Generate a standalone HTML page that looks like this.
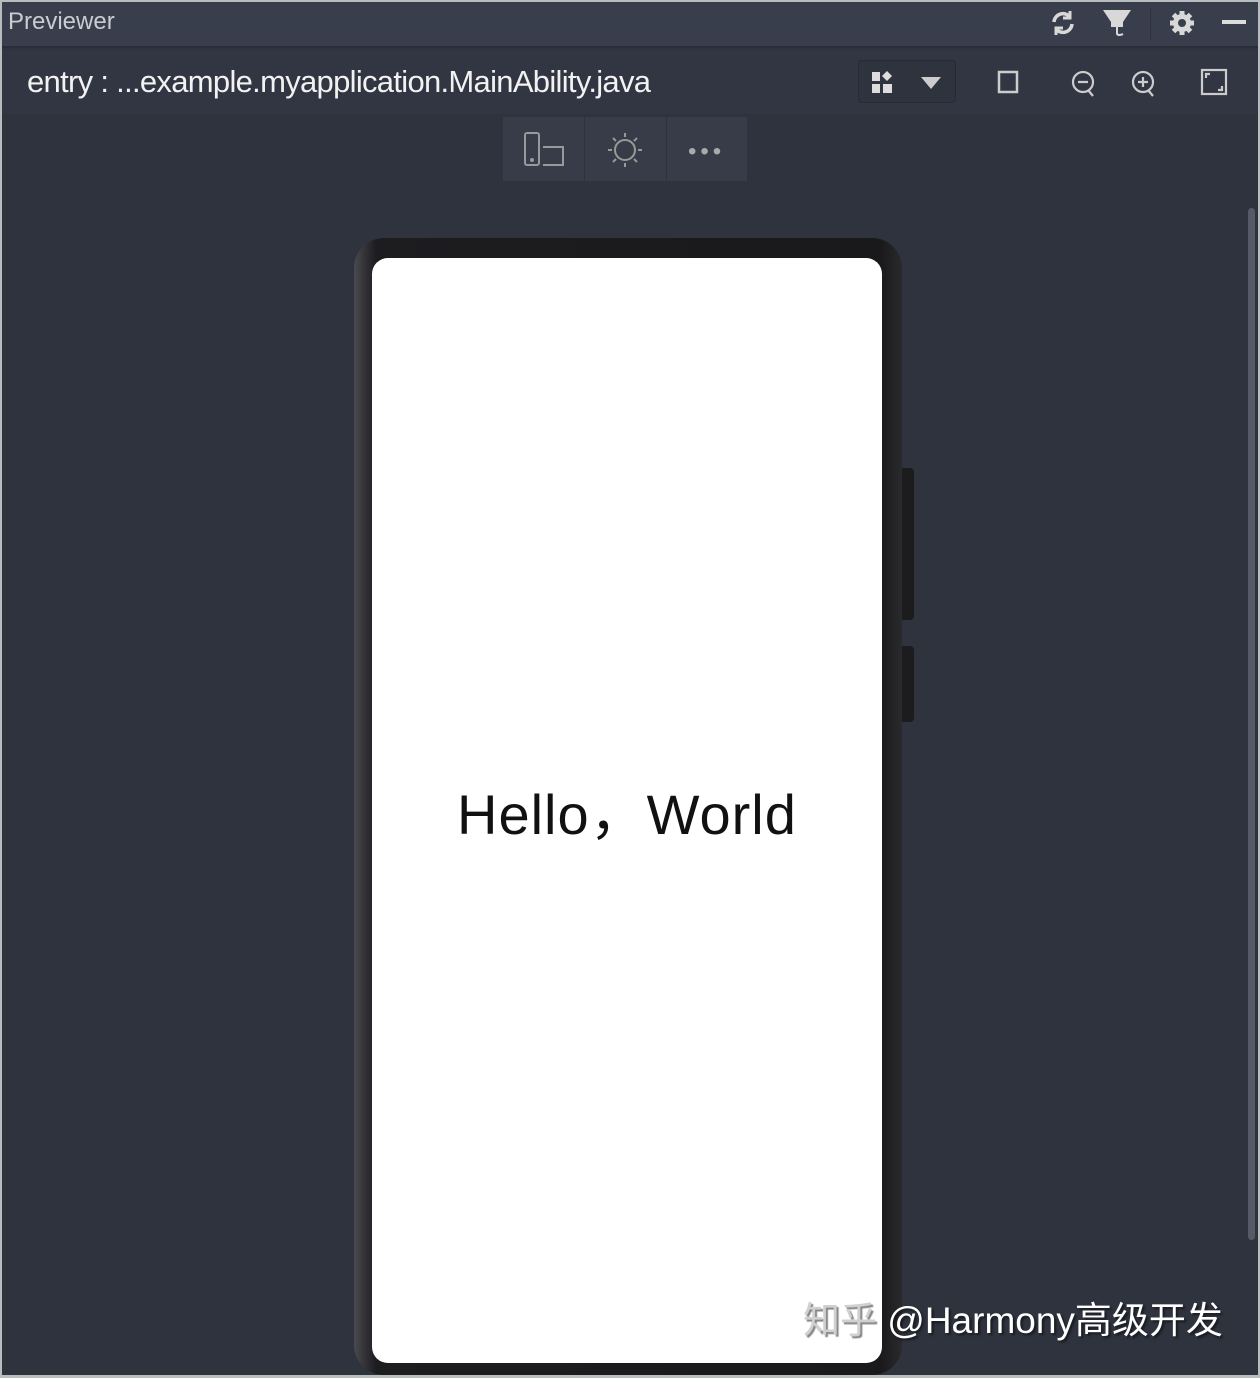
<!DOCTYPE html>
<html><head><meta charset="utf-8"><style>
*{margin:0;padding:0;box-sizing:border-box}
body{width:1260px;height:1378px;background:#2f333e;position:relative;overflow:hidden;font-family:"Liberation Sans","Noto Sans CJK SC",sans-serif}
.frame{position:absolute;left:0;top:0;width:1260px;height:1378px;border:2px solid #b9bcbf;border-bottom:3px solid #b9bfbd;pointer-events:none;z-index:9}
.title{position:absolute;left:0;top:0;width:1260px;height:48px;background:#383e4c;border-bottom:2px solid #2a2e38}
.title span{position:absolute;left:8px;top:8px;color:#c9ccd1;font-size:24px}
.bar{position:absolute;left:0;top:50px;width:1260px;height:64px;background:#323643}
.path{position:absolute;left:27px;top:64px;color:#f2f2f2;font-size:31px;letter-spacing:-0.7px}
.ico{position:absolute}
.strip{position:absolute;left:503px;top:117px;width:244px;height:64px;background:#383c48}
.strip div{position:absolute;top:0;width:1px;height:64px;background:#2e323c}
.phone{position:absolute;left:354px;top:238px;width:548px;height:1137px;border-radius:30px;background:linear-gradient(90deg,#4a4a4e 0,#1d1d20 4%,#19191b 96%,#2a2a2e 100%)}
.screen{position:absolute;left:372px;top:258px;width:510px;height:1105px;background:#fff;border-radius:16px}
.hello{position:absolute;left:457px;top:770px;font-size:56px;color:#111;letter-spacing:1px}
.btn{position:absolute;left:902px;width:12px;background:#1c1c1e;border-radius:0 4px 4px 0}
.scroll{position:absolute;left:1248px;top:208px;width:7px;height:1032px;background:#555a66;border-radius:4px}
.wm{position:absolute;left:803px;top:1290px;font-size:37px;color:#fff;text-shadow:2px 2px 2px rgba(0,0,0,.5)}
.wm b{font-weight:normal;color:#d0d0d0;text-shadow:2px 2px 1px #888}
</style></head><body>
<div class="title"><span>Previewer</span></div>
<svg class="ico" style="left:1048px;top:8px" width="30" height="30" viewBox="0 0 30 30" fill="none" stroke="#d8d8d8" stroke-width="3.5"><path d="M6 14a9 9 0 0 1 16-5"/><path d="M24 16a9 9 0 0 1-16 5"/><path d="M22 3v7h-7" stroke-width="3"/><path d="M8 27v-7h7" stroke-width="3"/></svg>
<svg class="ico" style="left:1100px;top:6px" width="34" height="34" viewBox="0 0 34 34"><path d="M3 4h28l-8 12v5h-12v-5z" fill="#d8d8d8"/><path d="M17 21v6c0 3 4 2 6 1" stroke="#d8d8d8" stroke-width="2" fill="none"/></svg>
<div style="position:absolute;left:1150px;top:8px;width:1px;height:32px;background:#2e333e"></div>
<svg class="ico" style="left:1167px;top:8px" width="30" height="30" viewBox="0 0 30 30"><circle cx="15" cy="15" r="9" fill="#d8d8d8"/><g stroke="#d8d8d8" stroke-width="5"><path d="M15 3v24M3 15h24M6.5 6.5l17 17M23.5 6.5l-17 17"/></g><circle cx="15" cy="15" r="4" fill="#383e4c"/></svg>
<div style="position:absolute;left:1222px;top:20px;width:24px;height:4px;background:#ddd"></div>
<div class="bar"></div>
<div class="path">entry : ...example.myapplication.MainAbility.java</div>
<div style="position:absolute;left:858px;top:60px;width:98px;height:43px;border:1px solid #262a33;border-radius:4px;background:#2f333e"></div>
<svg class="ico" style="left:870px;top:70px" width="26" height="26" viewBox="0 0 26 26" fill="#ddd"><rect x="2" y="2" width="8" height="9"/><rect x="2" y="14" width="8" height="9"/><rect x="13" y="14" width="9" height="9"/><path d="M17 1l5 5-5 5-5-5z"/></svg>
<svg class="ico" style="left:920px;top:75px" width="22" height="16"><path d="M1 2h20l-10 12z" fill="#ccc"/></svg>
<svg class="ico" style="left:994px;top:68px" width="28" height="28" viewBox="0 0 28 28" fill="none" stroke="#ccc" stroke-width="2.5"><rect x="5" y="4" width="18" height="20"/></svg>
<svg class="ico" style="left:1068px;top:68px" width="32" height="32" viewBox="0 0 32 32" fill="none" stroke="#ccc" stroke-width="2.2"><circle cx="15" cy="14" r="10"/><path d="M10 14h10M20 22l5 6"/></svg>
<svg class="ico" style="left:1128px;top:68px" width="32" height="32" viewBox="0 0 32 32" fill="none" stroke="#ccc" stroke-width="2.2"><circle cx="15" cy="14" r="10"/><path d="M10 14h10M15 9v10M20 22l5 6"/></svg>
<svg class="ico" style="left:1200px;top:68px" width="28" height="28" viewBox="0 0 28 28" fill="none" stroke="#ccc" stroke-width="2.2"><rect x="2" y="2" width="24" height="24"/><path d="M6 10V6h4M22 18v4h-4"/></svg>
<div class="strip"><div style="left:81px"></div><div style="left:163px"></div></div>
<svg class="ico" style="left:522px;top:130px" width="44" height="40" viewBox="0 0 44 40" fill="none" stroke="#999" stroke-width="2"><rect x="3" y="3" width="14" height="32" rx="2"/><path d="M21 17h20v18H21"/><circle cx="10" cy="30" r="1" fill="#999"/></svg>
<svg class="ico" style="left:605px;top:130px" width="40" height="40" viewBox="0 0 40 40" fill="none" stroke="#999" stroke-width="2"><circle cx="20" cy="20" r="10"/><path d="M20 3v4M20 33v4M3 20h4M33 20h4M8 8l3 3M29 29l3 3M32 8l-3 3M8 32l3-3"/></svg>
<div style="position:absolute;left:688px;top:138px;color:#aaa;font-size:24px;letter-spacing:4px">•••</div>
<div class="phone"></div>
<div class="btn" style="top:468px;height:152px"></div>
<div class="btn" style="top:646px;height:76px"></div>
<div class="screen"></div>
<div class="hello">Hello，World</div>
<div class="scroll"></div>
<div class="wm"><b>知乎</b> @Harmony高级开发</div>
<div class="frame"></div>
</body></html>
